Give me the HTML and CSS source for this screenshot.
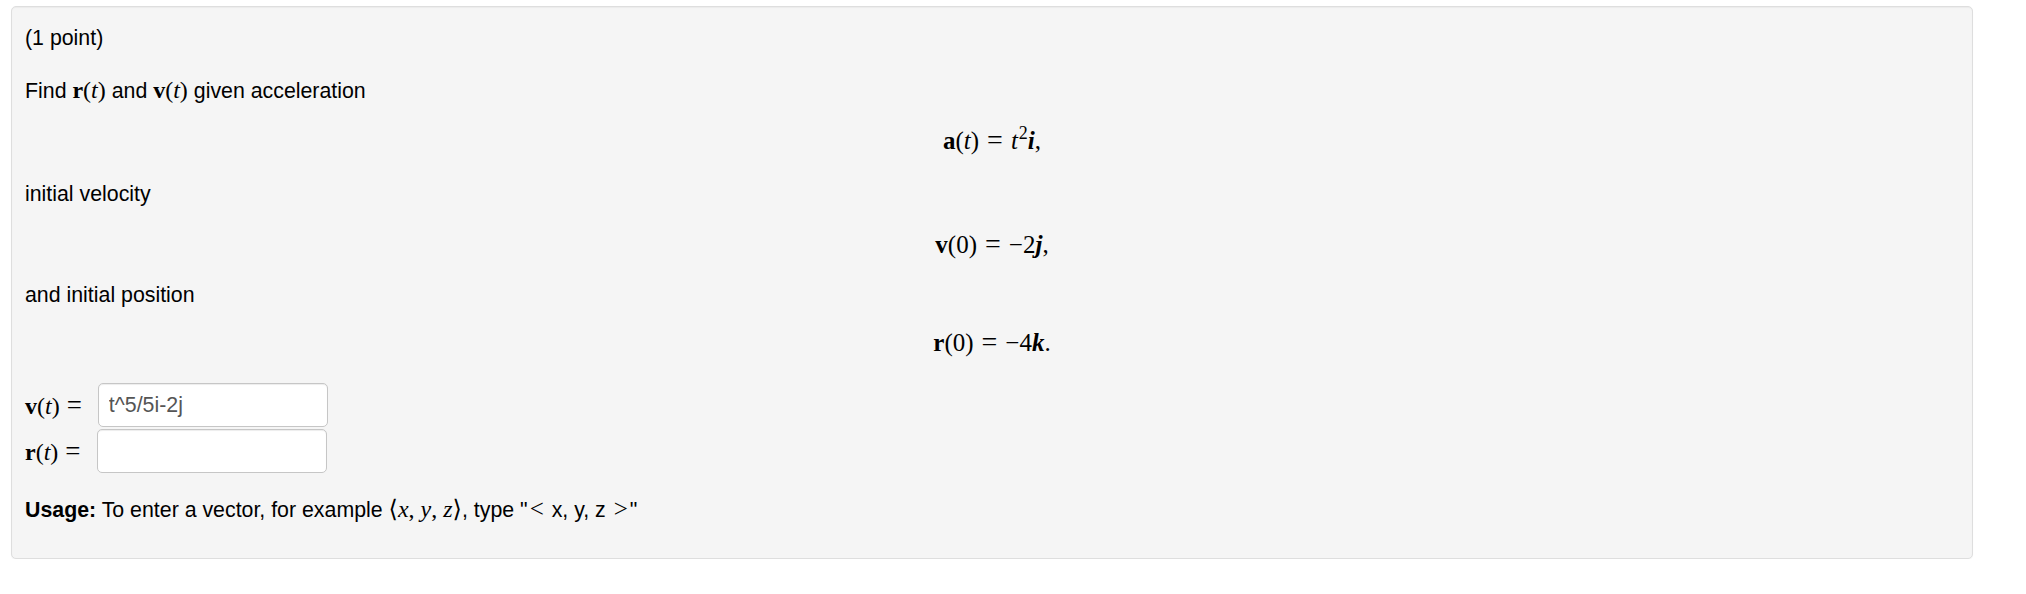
FILE: index.html
```html
<!DOCTYPE html>
<html lang="en">
<head>
<meta charset="utf-8">
<title>Problem</title>
<link rel="stylesheet" href="styles.css">
</head>
<body>
<div class="problem">
  <p class="line l1">(1 point)</p>
  <p class="line l2">Find <span class="m"><b>r</b>(<i>t</i>)</span> and <span class="m"><b>v</b>(<i>t</i>)</span> given acceleration</p>
  <div class="display d1"><b>a</b>(<i>t</i>)<span class="eq">=</span><i>t</i><sup>2</sup><b><i>i</i></b>,</div>
  <p class="line l3">initial velocity</p>
  <div class="display d2"><b>v</b>(0)<span class="eq">=</span>&minus;2<b><i>j</i></b>,</div>
  <p class="line l4">and initial position</p>
  <div class="display d3"><b>r</b>(0)<span class="eq">=</span>&minus;4<b><i>k</i></b>.</div>
  <div class="answers">
    <div class="row">
      <span class="label m"><b>v</b>(<i>t</i>)<span class="eq">=</span></span>
      <input class="ans ans-v" type="text" value="t^5/5i-2j">
    </div>
    <div class="row">
      <span class="label m"><b>r</b>(<i>t</i>)<span class="eq">=</span></span>
      <input class="ans ans-r" type="text" value="">
    </div>
  </div>
  <p class="line usage"><b>Usage:</b> To enter a vector, for example <span class="m ang">&#10216;<i>x</i>, <i>y</i>, <i>z</i>&#10217;</span>, type "<span class="m rel">&lt;</span> x, y, z <span class="m rel">&gt;</span>"</p>
</div>
</body>
</html>
```

FILE: styles.css
```css
html, body {
  margin: 0;
  padding: 0;
  background: #ffffff;
}

body {
  font-family: "Liberation Sans", Arial, Helvetica, sans-serif;
  font-size: 21.33px;
  color: #000;
}

.problem {
  box-sizing: border-box;
  width: 1962px;
  margin: 6px 0 0 11px;
  padding: 17px 13px 35px 13px;
  background: #f5f5f5;
  border: 1px solid #dedede;
  border-radius: 5px;
  box-shadow: inset 0 1px 1px rgba(0, 0, 0, 0.04), 0 1px 1px rgba(0, 0, 0, 0.04);
}

.line {
  margin: 0;
  line-height: 28px;
  height: 28px;
  white-space: nowrap;
}

.m {
  font-family: "Liberation Serif", "Times New Roman", "DejaVu Serif", serif;
  font-size: 24px;
}

.m b, .display b {
  font-weight: bold;
}

.display {
  font-family: "Liberation Serif", "Times New Roman", "DejaVu Serif", serif;
  font-size: 25px;
  line-height: 28px;
  height: 28px;
  text-align: center;
  white-space: nowrap;
}

.display sup {
  font-size: 18px;
  line-height: 0;
  vertical-align: 10px;
  margin-left: 1px;
}

.eq {
  display: inline-block;
  font-size: 1.12em;
  margin: 0 8px;
}

.label .eq {
  margin: 0 6px 0 7px;
}

.l2 { margin-top: 24px; }
.d1 { margin-top: 22px; }
.l3 { margin-top: 26px; }
.d2 { margin-top: 22px; }
.l4 { margin-top: 23px; }
.d3 { margin-top: 19px; }

.answers {
  margin-top: 27px;
  display: flex;
  flex-direction: column;
  gap: 2px;
}

.row {
  display: flex;
  align-items: center;
  height: 44px;
}

.label {
  display: inline-block;
  line-height: 28px;
  white-space: nowrap;
}

.ans {
  box-sizing: border-box;
  width: 230px;
  height: 44px;
  margin: 0 0 0 10px;
  padding: 0 10px;
  border: 1px solid #c6c6c6;
  border-radius: 5px;
  background: #ffffff;
  box-shadow: inset 0 1px 1px rgba(0, 0, 0, 0.075);
  font-family: "Liberation Sans", Arial, Helvetica, sans-serif;
  font-size: 21.33px;
  color: #555555;
  outline: none;
}

.usage { margin-top: 22px; }

.ang {
  font-size: 24px;
}

.rel {
  font-size: 25px;
  margin: 0 2px;
}
```
